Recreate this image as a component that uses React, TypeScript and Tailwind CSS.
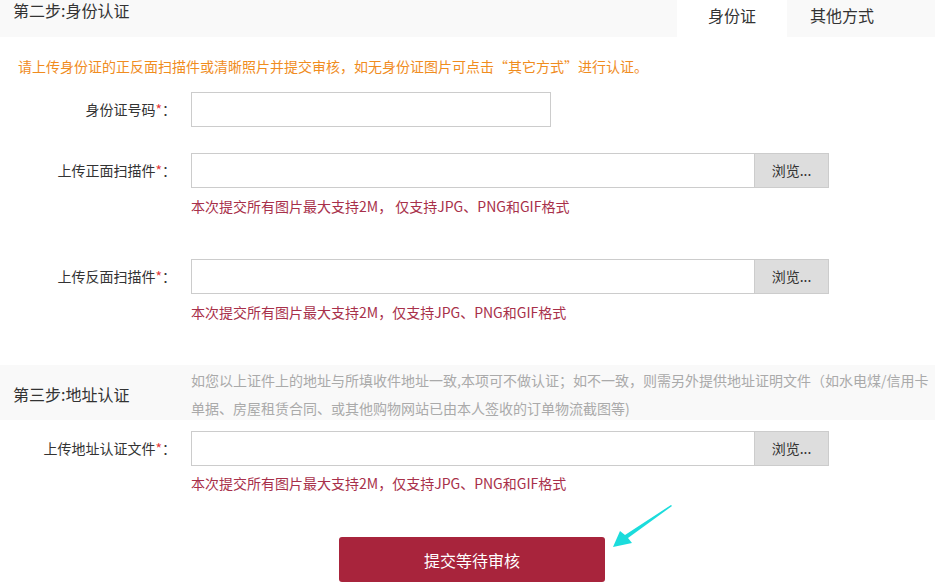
import React from 'react';

const font = { fontFamily: '"Microsoft YaHei", "Noto Sans CJK SC", "Noto Sans", sans-serif' };

function Label({ text }: { text: string }) {
  return (
    <div className="w-[180px] shrink-0 text-right text-[14px] text-[#333] pr-[4px]">
      {text}
      <span className="text-[#e4393c]">*</span>：
    </div>
  );
}

function FileRow({ label, hint, hintTop }: { label: string; hint: string; hintTop: string }) {
  return (
    <div>
      <div className="flex items-center">
        <Label text={label} />
        <div className="ml-[11px] flex h-[35px]">
          <div className="w-[564px] border border-[#ccc] bg-white" />
          <button className="w-[74px] border border-l-0 border-[#ccc] bg-[#ddd] text-[14px] text-[#333]">浏览...</button>
        </div>
      </div>
      <div className={`ml-[191px] text-[14px] leading-[18px] text-[#a8304a] ${hintTop}`}>{hint}</div>
    </div>
  );
}

export default function App() {
  return (
    <div className="w-[935px] h-[585px] bg-white overflow-hidden relative" style={font}>
      {/* header */}
      <div className="flex h-[37px] bg-[#f9f9f9]">
        <div className="flex-1 pl-[13px] text-[16px] leading-[20px] text-[#333]">第二步:身份认证</div>
        <div className="w-[110px] bg-white text-center text-[16px] leading-[31px] text-[#333]">身份证</div>
        <div className="w-[148px] text-center text-[16px] leading-[31px] text-[#333] pr-[38px]">其他方式</div>
      </div>

      <div className="pl-[18px] mt-[20px] text-[14px] leading-[18px] text-[#f08c1e]">
        请上传身份证的正反面扫描件或清晰照片并提交审核，如无身份证图片可点击“其它方式”进行认证。
      </div>

      {/* id number */}
      <div className="flex items-center mt-[17px]">
        <Label text="身份证号码" />
        <div className="ml-[11px] h-[35px] w-[360px] border border-[#ccc] bg-white" />
      </div>

      <div className="mt-[26px]">
        <FileRow label="上传正面扫描件" hint="本次提交所有图片最大支持2M， 仅支持JPG、PNG和GIF格式" hintTop="mt-[9px]" />
      </div>
      <div className="mt-[44px]">
        <FileRow label="上传反面扫描件" hint="本次提交所有图片最大支持2M，仅支持JPG、PNG和GIF格式" hintTop="mt-[9px]" />
      </div>

      {/* step 3 */}
      <div className="mt-[44px] flex h-[55px] bg-[#f9f9f9]">
        <div className="w-[191px] shrink-0 pl-[13px] flex items-center pt-[2px] text-[16px] text-[#333]">第三步:地址认证</div>
        <div className="pt-[1px] whitespace-nowrap text-[14px] leading-[28px] text-[#aaa]">
          如您以上证件上的地址与所填收件地址一致,本项可不做认证；如不一致，则需另外提供地址证明文件（如水电煤/信用卡
          <br />
          单据、房屋租赁合同、或其他购物网站已由本人签收的订单物流截图等)
        </div>
      </div>

      <div className="mt-[11px]">
        <FileRow label="上传地址认证文件" hint="本次提交所有图片最大支持2M，仅支持JPG、PNG和GIF格式" hintTop="mt-[8px]" />
      </div>

      <div className="mt-[45px] ml-[339px]">
        <button className="h-[45px] w-[266px] rounded-[3px] bg-[#a8243c] text-[16px] text-white">提交等待审核</button>
      </div>

      <svg className="absolute left-[600px] top-[500px]" width="80" height="60" viewBox="0 0 80 60">
        <path d="M72 6 L28 38 L32 43 L13 47 L20 31 L25 35 L71 5 Z" fill="#1bdcdc" />
      </svg>
    </div>
  );
}
